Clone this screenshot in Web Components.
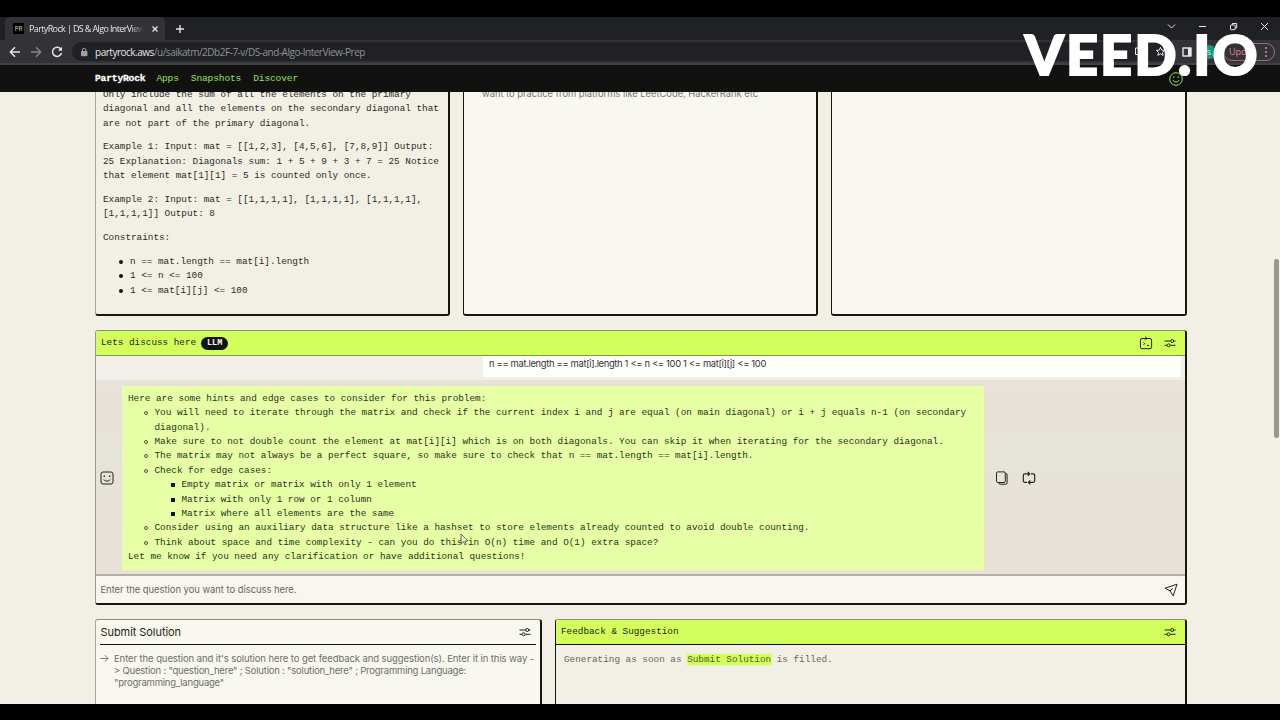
<!DOCTYPE html>
<html lang="en">
<head>
<meta charset="utf-8">
<title>PartyRock | DS &amp; Algo InterView Prep</title>
<style>
  body {
    margin: 0;
    width: 1280px;
    height: 720px;
    overflow: hidden;
    background: #000;
    --mono: "Liberation Mono", monospace;
    --sans: Inter, sans-serif;
    --ink: #161713;
    --lime: #d3ff5d;
    --paper: #f2f0e5;
    --card: #f8f8f1;
  }
</style>
</head>
<body>
<app-screen></app-screen>

<script>
const icons = {
  back: [12, '<path d="M11 6H1.5M6 1.3 1.3 6 6 10.7" stroke-width="1.5"/>'],
  forward: [12, '<path d="M1 6h9.5M6 1.3 10.7 6 6 10.7" stroke-width="1.3"/>'],
  reload: [12, '<path d="M10.2 3.6A4.6 4.6 0 1 0 10.6 7" stroke-width="1.5"/><path d="M11 .8v4H7z" fill="currentColor" stroke="none"/>'],
  lock: [10, '<rect x="2" y="4" width="6.4" height="5.2" rx=".6" fill="currentColor" stroke="none"/><path d="M3.5 4.5V3a1.7 1.7 0 0 1 3.4 0v1.5"/>'],
  close: [8, '<path d="m1.5 1.5 5 5m0-5-5 5" stroke-width="1.3"/>'],
  plus: [10, '<path d="M5 1v8M1 5h8" stroke-width="1.4"/>'],
  chevron: [9, '<path d="m1 2.5 3.5 3.5L8 2.5"/>'],
  minimize: [9, '<path d="M1 4.5h7"/>'],
  restore: [9, '<rect x="1.5" y="3" width="4.7" height="4.7" rx=".6"/><path d="M3.3 3V1.5h4.4v4.4H6.2"/>'],
  exit: [9, '<path d="m1 1 7 7m0-7L1 8"/>'],
  star: [11, '<path d="m5.5 1.3 1.2 2.8 3 .3-2.3 2 .7 3-2.6-1.6-2.6 1.6.7-3-2.3-2 3-.3z"/>'],
  panel: [10, '<rect x="1" y="1" width="8" height="8" stroke-width="1.4"/><path d="M6 1h3v8H6z" fill="currentColor" stroke="none"/>'],
  share: [10, '<path d="M4 2H1.5v6.5h6.5V6M4.5 5.5 9 2M6 2h3v3"/>'],
  dots: [12, '<g fill="currentColor" stroke="none"><circle cx="6" cy="2" r="1.1"/><circle cx="6" cy="6" r="1.1"/><circle cx="6" cy="10" r="1.1"/></g>'],
  smile: [14, '<circle cx="7" cy="7" r="6.3"/><path d="M4 8c.6 2.6 5.4 2.6 6 0M4.8 4.3v1.7M9.2 4.3v1.7"/>'],
  bot: [14, '<rect x="1" y="1" width="12" height="12" rx="2"/><path d="M4.3 4.6v1.5M9.7 4.6v1.5" stroke-width="1.3"/><path d="M3.8 8.6c1.4 2 5 2 6.4 0"/>'],
  reset: [14, '<path d="M5 2.5H3a1.6 1.6 0 0 0-1.6 1.6v7A1.6 1.6 0 0 0 3 12.7h8a1.6 1.6 0 0 0 1.6-1.6v-7A1.6 1.6 0 0 0 11 2.5H5M6 .6l2 1.9-2 2M4.5 6.5l1.2 1.2-1.2 1.2M8 9.4h2.2"/>'],
  sliders: [12, '<path d="M.5 4h6M10 4h1.5M.5 8.3H3M6.3 8.3h5.2"/><circle cx="8.2" cy="4" r="1.5"/><circle cx="4.6" cy="8.3" r="1.5"/>'],
  copy: [14, '<rect x="1.5" y=".9" width="8.8" height="10.6" rx="1.2"/><path d="M10.5 2.6h.6a1 1 0 0 1 1 1v8.3a1.3 1.3 0 0 1-1.3 1.3H5a1 1 0 0 1-1-1v-.5"/>'],
  retry: [14, '<path d="M4 2.8H2.8A1.5 1.5 0 0 0 1.3 4.3v5.5a1.5 1.5 0 0 0 1.5 1.5H5M10 11.3h1.2a1.5 1.5 0 0 0 1.5-1.5V4.3a1.5 1.5 0 0 0-1.5-1.5H9M4 2.8h3.2M5.8.8l2 2-2 2M10 11.3H7M8.3 9.3l-2 2 2 2" stroke-width="1.15"/>'],
  send: [14, '<path d="M13 1.2 1 5.2l5 2.7 3.2 5zM6 7.9l2.9-2.5"/>'],
  arrow: [9, '<path d="M.3 4.5H8M4.8 1.2 8.1 4.5 4.8 7.8" stroke-width=".9"/>']
};

class UiIcon extends HTMLElement {
  connectedCallback() {
    const [box, shape] = icons[this.getAttribute('name')];
    this.attachShadow({ mode: 'open' }).innerHTML = `
      <style>
        :host { display: block; flex: none; width: ${box}px; height: ${box}px; }
        svg { display: block; width: 100%; height: 100%; overflow: visible; }
      </style>
      <svg viewBox="0 0 ${box} ${box}" fill="none" stroke="currentColor" stroke-linejoin="round">${shape}</svg>
    `;
  }
}

// a single line of text, tracked so that it is exactly w pixels wide
class FitText extends HTMLElement {
  connectedCallback() {
    this.attachShadow({ mode: 'open' }).innerHTML = `
      <style>
        :host { display: block; width: max-content; white-space: nowrap; }
      </style>
      <slot></slot>
    `;
    const target = Number(this.getAttribute('w'));
    const natural = this.getBoundingClientRect().width;
    this.style.letterSpacing = (target - natural) / this.textContent.length + 'px';
  }
}

class BrowserChrome extends HTMLElement {
  connectedCallback() {
    this.attachShadow({ mode: 'open' }).innerHTML = `
      <style>
        :host { display: block; font: 9px/12px "Open Sans", sans-serif; color: #e6e6e8; }
        .tabs { display: flex; height: 23px; background: #202124; align-items: center; }
        .tab {
          display: flex; align-items: center; box-sizing: border-box;
          width: 160px; height: 23px; margin-left: 5px; padding: 0 6px 0 8px;
          background: #323237; border-radius: 5px 5px 0 0;
        }
        .favicon {
          width: 11px; height: 11px; background: #000; color: #d0d0c8;
          font: 6px/11px var(--sans); text-align: center;
        }
        .title {
          width: 115px; margin: 0 auto 0 5px; overflow: hidden;
          -webkit-mask-image: linear-gradient(90deg, #000 88%, transparent);
        }
        .new { margin-left: 10px; }
        .window { display: flex; gap: 22px; margin: -4px 11px 0 auto; }
        .bar { display: flex; align-items: center; height: 23px; background: #323237; border-bottom: 2px solid #414146; padding: 0 5px 0 9px; }
        .nav { display: flex; gap: 9px; align-items: center; }
        .nav ui-icon:nth-child(2) { color: #88888c; }
        .omni {
          display: flex; align-items: center; gap: 6px; box-sizing: border-box;
          width: 1101px; height: 19px; margin-left: 9px; padding: 0 7px 0 7px;
          border-radius: 10px; background: #202124; font-size: 10px;
        }
        .omni ui-icon[name=lock] { color: #a0a0a4; }
        .path { color: #8f9195; }
        .star { display: flex; gap: 11px; margin-left: auto; }
        .avatar {
          width: 14px; height: 14px; margin: 0 7px 0 10px; border-radius: 50%;
          background: #14967f; font-size: 8px; line-height: 14px; text-align: center;
        }
        .update {
          display: flex; align-items: center; justify-content: space-between; box-sizing: border-box;
          width: 52px; height: 18px; padding: 0 2px 0 5px;
          border: 1px solid #9c6f75; border-radius: 9px; color: #e2868a;
        }
        .panel { margin-left: 9px; }
      </style>
      <div class="tabs">
        <div class="tab">
          <div class="favicon">PR</div>
          <div class="title"><fit-text w="115">PartyRock | DS &amp; Algo InterView</fit-text></div>
          <ui-icon name="close"></ui-icon>
        </div>
        <ui-icon class="new" name="plus"></ui-icon>
        <div class="window">
          <ui-icon name="chevron"></ui-icon>
          <ui-icon name="minimize"></ui-icon>
          <ui-icon name="restore"></ui-icon>
          <ui-icon name="exit"></ui-icon>
        </div>
      </div>
      <div class="bar">
        <div class="nav">
          <ui-icon name="back"></ui-icon>
          <ui-icon name="forward"></ui-icon>
          <ui-icon name="reload"></ui-icon>
        </div>
        <div class="omni">
          <ui-icon name="lock"></ui-icon>
          <fit-text w="270">partyrock.aws<span class="path">/u/saikatm/2Db2F-7-v/DS-and-Algo-InterView-Prep</span></fit-text>
          <div class="star"><ui-icon name="share"></ui-icon><ui-icon name="star"></ui-icon></div>
        </div>
        <ui-icon class="panel" name="panel"></ui-icon>
        <div class="avatar">S</div>
        <div class="update"><span>Upda</span><ui-icon name="dots"></ui-icon></div>
      </div>
    `;
  }
}

class SiteNav extends HTMLElement {
  connectedCallback() {
    this.attachShadow({ mode: 'open' }).innerHTML = `
      <style>
        :host {
          display: flex; align-items: center; gap: 12px; box-sizing: border-box;
          height: 27px; padding: 0 97px 0 95px; background: #111210;
          font: 9.6px/14px var(--mono); color: #9be057;
        }
        b { margin-right: -1px; color: #fff; -webkit-text-stroke: .3px; }
        ui-icon { margin-left: auto; }
      </style>
      <b><fit-text w="50.4">PartyRock</fit-text></b>
      <fit-text w="22.4">Apps</fit-text>
      <fit-text w="50.4">Snapshots</fit-text>
      <fit-text w="44.8">Discover</fit-text>
      <ui-icon name="smile"></ui-icon>
    `;
  }
}

// the outlined box behind every widget: "cut" drops the top edge, "lit" fills the header
class WidgetCard extends HTMLElement {
  connectedCallback() {
    this.attachShadow({ mode: 'open' }).innerHTML = `
      <style>
        :host {
          display: flex; flex-direction: column; box-sizing: border-box; min-width: 0;
          border: 1px solid var(--ink); border-color: #8d8d7c var(--ink) var(--ink) var(--left, var(--ink));
          border-right-width: 2px; border-bottom-width: 2px;
          border-radius: 3px; background: var(--fill, var(--card)); overflow: hidden;
        }
        :host([cut]) { border-top: 0; border-radius: 0 0 3px 3px; }
        :host([cut]) header { display: none; }
        header {
          display: flex; align-items: center; flex: none; box-sizing: border-box;
          height: 25px; padding: 0 9px 0 5px;
          border-bottom: 1px solid var(--rule, var(--ink));
          font: 9.33px/14px var(--mono); color: #1d2410;
        }
        :host([lit]) header { background: var(--lime); }
        :host([plain]) header { margin: 0 4px; padding: 0 5px 0 0.5px; font: 11px/14px var(--sans); }
        .tools { display: flex; gap: 11px; align-items: center; margin-left: auto; }
      </style>
      <header><slot name="title"></slot><div class="tools"><slot name="tools"></slot></div></header>
      <slot></slot>
    `;
  }
}

class ProblemText extends HTMLElement {
  connectedCallback() {
    this.attachShadow({ mode: 'open' }).innerHTML = `
      <style>
        :host { display: block; margin-top: -4px; padding: 0 7px; font: 9.33px/14.3px var(--mono); color: #2b2b26; white-space: nowrap; }
        p { margin: 0 0 9.6px; }
        ul { margin: 0; padding: 0; list-style: none; }
        li { display: flex; align-items: center; gap: 7px; padding-left: 16px; }
        li::before { content: ""; width: 4px; height: 4px; border-radius: 50%; background: #111; }
      </style>
      <p>Only include the sum of all the elements on the primary<br>diagonal and all the elements on the secondary diagonal that<br>are not part of the primary diagonal.</p>
      <p>Example 1: Input: mat = [[1,2,3], [4,5,6], [7,8,9]] Output:<br>25 Explanation: Diagonals sum: 1 + 5 + 9 + 3 + 7 = 25 Notice<br>that element mat[1][1] = 5 is counted only once.</p>
      <p>Example 2: Input: mat = [[1,1,1,1], [1,1,1,1], [1,1,1,1],<br>[1,1,1,1]] Output: 8</p>
      <p>Constraints:</p>
      <ul>
        <li>n == mat.length == mat[i].length</li>
        <li>1 &lt;= n &lt;= 100</li>
        <li>1 &lt;= mat[i][j] &lt;= 100</li>
      </ul>
    `;
  }
}

class ChatLog extends HTMLElement {
  connectedCallback() {
    this.attachShadow({ mode: 'open' }).innerHTML = `
      <style>
        :host { display: flex; flex-direction: column; flex: none; }
        .asked { display: flex; justify-content: flex-end; height: 24px; padding-right: 4px; background: #f1efe7; }
        .asked div {
          width: 692px; height: 21px; padding-left: 6px; background: #fefefb;
          font: 9.4px/16px var(--sans); color: #33333a;
        }
        .answer {
          display: flex; align-items: center; box-sizing: border-box; height: 194px; padding: 1px 0 0 4px;
          background: linear-gradient(#e8e2d8, #e6e3d8 40%, #e8e1d7); color: #22221e;
        }
        .bubble {
          box-sizing: border-box; width: 862px; height: 184px; margin: 1px 11px 0 8px; padding: 6px;
          background: #e7ffa5; font: 9.33px/14.36px var(--mono); color: #27331a; white-space: nowrap;
        }
        ul { margin: 0; padding: 0; list-style: none; }
        li { display: grid; grid-template-columns: 3px 1fr; column-gap: 7.5px; padding-left: 16px; }
        li::before { content: ""; box-sizing: border-box; width: 4px; height: 4px; margin-top: 5px; border: 1px solid #4c5a34; border-radius: 50%; }
        li.sub { padding-left: 43px; }
        li.sub::before { border: 0; border-radius: 0; background: #111; }
        .copy { margin-right: 13px; }
      </style>
      <div class="asked"><div><fit-text w="277">n == mat.length == mat[i].length 1 &lt;= n &lt;= 100 1 &lt;= mat[i][j] &lt;= 100</fit-text></div></div>
      <div class="answer">
        <ui-icon name="bot"></ui-icon>
        <div class="bubble">
          Here are some hints and edge cases to consider for this problem:
          <ul>
            <li><div>You will need to iterate through the matrix and check if the current index i and j are equal (on main diagonal) or i + j equals n-1 (on secondary<br>diagonal).</div></li>
            <li>Make sure to not double count the element at mat[i][i] which is on both diagonals. You can skip it when iterating for the secondary diagonal.</li>
            <li>The matrix may not always be a perfect square, so make sure to check that n == mat.length == mat[i].length.</li>
            <li>Check for edge cases:</li>
            <li class="sub">Empty matrix or matrix with only 1 element</li>
            <li class="sub">Matrix with only 1 row or 1 column</li>
            <li class="sub">Matrix where all elements are the same</li>
            <li>Consider using an auxiliary data structure like a hashset to store elements already counted to avoid double counting.</li>
            <li>Think about space and time complexity - can you do this in O(n) time and O(1) extra space?</li>
          </ul>
          Let me know if you need any clarification or have additional questions!
        </div>
        <ui-icon class="copy" name="copy"></ui-icon>
        <ui-icon name="retry"></ui-icon>
      </div>
    `;
  }
}

class AskBar extends HTMLElement {
  connectedCallback() {
    this.attachShadow({ mode: 'open' }).innerHTML = `
      <style>
        :host {
          display: flex; align-items: center; justify-content: space-between; box-sizing: border-box;
          flex: 1; padding: 0 7px 0 4.5px; border-top: 2px solid #b4afa4;
          background: #f8f6ee; font: 9.4px/14px var(--sans); color: #66665f;
        }
        ui-icon { color: #22221e; }
      </style>
      <slot></slot>
      <ui-icon name="send"></ui-icon>
    `;
  }
}

class AppScreen extends HTMLElement {
  connectedCallback() {
    this.attachShadow({ mode: 'open' }).innerHTML = `
      <style>
        :host { display: block; position: relative; width: 1280px; height: 720px; }
        browser-chrome { padding-top: 17px; }
        main {
          display: flex; justify-content: space-between; box-sizing: border-box;
          height: 612px; padding-left: 95px; background: var(--paper); overflow: hidden;
        }
        .page { display: flex; flex-direction: column; gap: 14px; width: 1092px; }
        .page > * { flex: none; }
        .row { display: grid; column-gap: 13px; }
        .three { height: 224px; grid-template-columns: 355px 355px 356px; }
        .two { height: 100px; grid-template-columns: 447px 632px; }
        .talk { height: 275px; --left: #9a988d; --rule: #7f9c44; }
        .grey { --fill: var(--paper); }
        .hint { margin: -5px 0 0 18px; font: 9.4px/14px var(--sans); color: #77776f; }
        .llm {
          margin-left: 5px; width: 27px; border-radius: 7px; background: #10140a;
          font: bold 8.5px/13px var(--mono); color: #fff; text-align: center;
        }
        .title { display: flex; align-items: center; color: #1d2410; }
        .entry { display: flex; gap: 5px; padding: 7.5px 4px; font: 9.5px/12px var(--sans); color: #6e6e67; }
        .entry ui-icon { margin-top: 1.5px; }
        .wait { padding: 8px; font: 9.33px/14px var(--mono); color: #66665e; }
        mark { background: var(--lime); color: #4c6420; box-shadow: 0 0 2px var(--lime); }
        .scroll { width: 5px; height: 179px; margin: 167px 1px 0 0; border-radius: 3px; background: #97978b; }
        .brand {
          position: absolute; left: 1025px; top: 20px;
          font: 900 55px/68px Lato, sans-serif; color: #fff; -webkit-text-stroke: 2.2px #fff;
        }
        .cursor { position: absolute; left: 460px; top: 533px; width: 9px; height: 13px; }
      </style>
      <browser-chrome></browser-chrome>
      <site-nav></site-nav>
      <main>
        <div class="page">
          <div class="row three">
            <widget-card cut class="grey" style="--left: #a5a59a"><problem-text></problem-text></widget-card>
            <widget-card cut><div class="hint"><fit-text w="276">want to practice from platforms like LeetCode, HackerRank etc</fit-text></div></widget-card>
            <widget-card cut></widget-card>
          </div>
          <widget-card lit class="talk">
            <div slot="title" class="title">Lets discuss here<div class="llm">LLM</div></div>
            <ui-icon slot="tools" name="reset"></ui-icon>
            <ui-icon slot="tools" name="sliders"></ui-icon>
            <chat-log></chat-log>
            <ask-bar><fit-text w="196">Enter the question you want to discuss here.</fit-text></ask-bar>
          </widget-card>
          <div class="row two">
            <widget-card plain style="--left: #a5a59a">
              <fit-text slot="title" w="80.5">Submit Solution</fit-text>
              <ui-icon slot="tools" name="sliders"></ui-icon>
              <div class="entry">
                <ui-icon name="arrow"></ui-icon>
                <div>
                  <fit-text w="420">Enter the question and it's solution here to get feedback and suggestion(s). Enter it in this way -</fit-text>
                  <fit-text w="352">&gt; Question : "question_here" ; Solution : "solution_here" ; Programming Language:</fit-text>
                  <fit-text w="110">"programming_language"</fit-text>
                </div>
              </div>
            </widget-card>
            <widget-card lit class="grey">
              <span slot="title">Feedback &amp; Suggestion</span>
              <ui-icon slot="tools" name="sliders"></ui-icon>
              <div class="wait">Generating as soon as <mark>Submit Solution</mark> is filled.</div>
            </widget-card>
          </div>
        </div>
        <div class="scroll"></div>
      </main>
      <fit-text class="brand" w="235">VEED.IO</fit-text>
      <svg class="cursor" viewBox="0 0 9 13"><path d="M1 1v9.5l2.3-2L5 12l1.3-.6L4.8 8H8z" fill="#f0f4dc" stroke="#45503a" stroke-width=".8"/></svg>
    `;
  }
}

customElements.define('app-screen', AppScreen);
customElements.define('browser-chrome', BrowserChrome);
customElements.define('site-nav', SiteNav);
customElements.define('widget-card', WidgetCard);
customElements.define('problem-text', ProblemText);
customElements.define('chat-log', ChatLog);
customElements.define('ask-bar', AskBar);
customElements.define('ui-icon', UiIcon);
// last, since it measures text inside all of the others
customElements.define('fit-text', FitText);
</script>
</body>
</html>
